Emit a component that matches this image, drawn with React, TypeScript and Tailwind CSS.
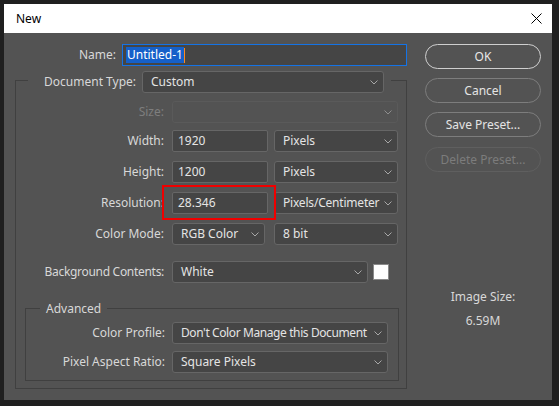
import React from "react";

function Chevron() {
  return (
    <svg width="8" height="5" viewBox="0 0 8 5" className="shrink-0">
      <path d="M0.5 0.5 L4 4 L7.5 0.5" fill="none" stroke="#a8a8a8" strokeWidth="1" />
    </svg>
  );
}

function Select(props: { value?: string; className?: string; textClass?: string; disabled?: boolean }) {
  const { value, className, textClass, disabled } = props;
  return (
    <div
      className={`flex h-[22px] items-center justify-between rounded-[3px] border pl-[8px] pr-[5px] ${
        disabled ? "border-[#5e5e5e] bg-[#535353] opacity-70" : "border-[#666666] bg-[#454545]"
      } ${className ?? ""}`}
    >
      <span className={`whitespace-nowrap leading-[16px] text-[#e4e4e4] ${textClass ?? ""}`}>{value}</span>
      <Chevron />
    </div>
  );
}

function Input(props: { value: string; className?: string }) {
  return (
    <div
      className={`flex h-[22px] items-center rounded-[2px] border border-[#666666] bg-[#454545] pl-[5px] leading-[16px] text-[#e4e4e4] ${
        props.className ?? ""
      }`}
    >
      {props.value}
    </div>
  );
}

function Btn(props: { label: string; primary?: boolean; disabled?: boolean }) {
  const { label, primary, disabled } = props;
  return (
    <div
      className={`flex h-[25px] w-[116px] items-center justify-center rounded-full leading-[16px] ${
        primary
          ? "border-[1.5px] border-[#cfcfcf] text-[#e8e8e8]"
          : disabled
          ? "border border-[#5f5f5f] text-[#7c7c7c]"
          : "border border-[#7d7d7d] text-[#e4e4e4]"
      }`}
    >
      {label}
    </div>
  );
}

function Row(props: { label: string; children: React.ReactNode; className?: string; labelClass?: string; dim?: boolean }) {
  return (
    <div className={`flex items-center ${props.className ?? ""}`}>
      <div
        className={`w-[148px] whitespace-nowrap text-right leading-[16px] ${props.dim ? "text-[#7e7e7e]" : "text-[#d8d8d8]"} ${
          props.labelClass ?? ""
        }`}
      >
        {props.label}
      </div>
      <div className="ml-[8px] flex items-center">{props.children}</div>
    </div>
  );
}

export default function App() {
  return (
    <div className="h-[406px] w-[559px] bg-[#1f1f1f] pb-[6px] pl-[4px] pr-[7px] pt-[4px] font-['Noto_Sans',sans-serif] text-[12px] leading-none">
      <div className="flex h-full flex-col">
        <div className="flex h-[29px] items-center justify-between bg-white pl-[12px] pr-[10px] leading-[16px] text-black">
          <span>New</span>
          <svg width="11" height="11" viewBox="0 0 11 11">
            <path d="M0.5 0.5 L10.5 10.5 M10.5 0.5 L0.5 10.5" stroke="#000" strokeWidth="1" />
          </svg>
        </div>
        <div className="flex flex-1 bg-[#535353]">
          <div className="w-[403px] pt-[11px]">
            <div className="flex items-center">
              <div className="w-[112px] text-right leading-[16px] text-[#d8d8d8]">Name:</div>
              <div className="ml-[6px] flex h-[22px] w-[285px] items-center border border-[#1473e6] bg-[#454545] pl-[3px]">
                <span className="bg-[#1560c9] px-[1px] leading-[16px] text-white">Untitled-1</span>
                <span className="h-[15px] w-[1px] bg-[#ff8a1c]" />
              </div>
            </div>

            <div className="ml-[11px] mt-[14px] h-[309px] w-[392px] border border-[#404040]">
              <div className="-mt-[10px] ml-[12px] flex w-fit items-center bg-[#535353] pr-[7px]">
                <div className="w-[108px] text-right leading-[16px] text-[#d8d8d8]">Document Type:</div>
                <Select value="Custom" className="ml-[6px] w-[242px]" />
              </div>

              <Row label="Size:" dim className="mt-[8px]">
                <Select disabled className="w-[226px]" />
              </Row>
              <Row label="Width:" className="mt-[7px]">
                <Input value="1920" className="w-[96px]" />
                <Select value="Pixels" className="ml-[6px] w-[124px]" />
              </Row>
              <Row label="Height:" className="mt-[9px]">
                <Input value="1200" className="w-[96px]" />
                <Select value="Pixels" className="ml-[6px] w-[124px]" />
              </Row>
              <Row label="Resolution:" className="mt-[9px]">
                <div className="relative">
                  <Input value="28.346" className="w-[96px]" />
                  <div className="absolute -left-[10px] -top-[7px] h-[35px] w-[114px] border-2 border-[#f00000]" />
                </div>
                <Select value="Pixels/Centimeter" className="ml-[6px] w-[124px] pl-[7px] pr-[4px]" textClass="tracking-[-0.2px]" />
              </Row>
              <Row label="Color Mode:" className="mt-[9px]">
                <Select value="RGB Color" className="w-[93px]" />
                <Select value="8 bit" className="ml-[9px] w-[124px]" />
              </Row>
              <Row label="Background Contents:" className="mt-[16px]" labelClass="tracking-[-0.3px]">
                <Select value="White" className="w-[196px]" />
                <div className="ml-[5px] h-[16px] w-[16px] border border-[#8a8a8a] bg-white" />
              </Row>

              <div className="ml-[9px] mt-[25px] h-[73px] w-[374px] border border-[#404040]">
                <div className="-mt-[8px] ml-[14px] w-fit bg-[#535353] px-[6px] leading-[16px] text-[#d8d8d8]">Advanced</div>
                <div className="mt-[5px] flex items-center">
                  <div className="w-[139px] text-right leading-[16px] text-[#d8d8d8]">Color Profile:</div>
                  <Select
                    value="Don't Color Manage this Document"
                    className="ml-[7px] w-[216px] pr-[4px]"
                    textClass="tracking-[-0.4px]"
                  />
                </div>
                <div className="mt-[7px] flex items-center">
                  <div className="w-[139px] text-right leading-[16px] text-[#d8d8d8]">Pixel Aspect Ratio:</div>
                  <Select value="Square Pixels" className="ml-[7px] w-[216px]" />
                </div>
              </div>
            </div>
          </div>

          <div className="ml-[18px] flex w-[116px] flex-col pt-[11px]">
            <Btn label="OK" primary />
            <div className="mt-[9px]">
              <Btn label="Cancel" />
            </div>
            <div className="mt-[9px]">
              <Btn label="Save Preset..." />
            </div>
            <div className="mt-[10px]">
              <Btn label="Delete Preset..." disabled />
            </div>
            <div className="mt-[117px] text-center leading-[16px] text-[#d8d8d8]">Image Size:</div>
            <div className="mt-[8px] text-center leading-[16px] text-[#d8d8d8]">6.59M</div>
          </div>
        </div>
      </div>
    </div>
  );
}
